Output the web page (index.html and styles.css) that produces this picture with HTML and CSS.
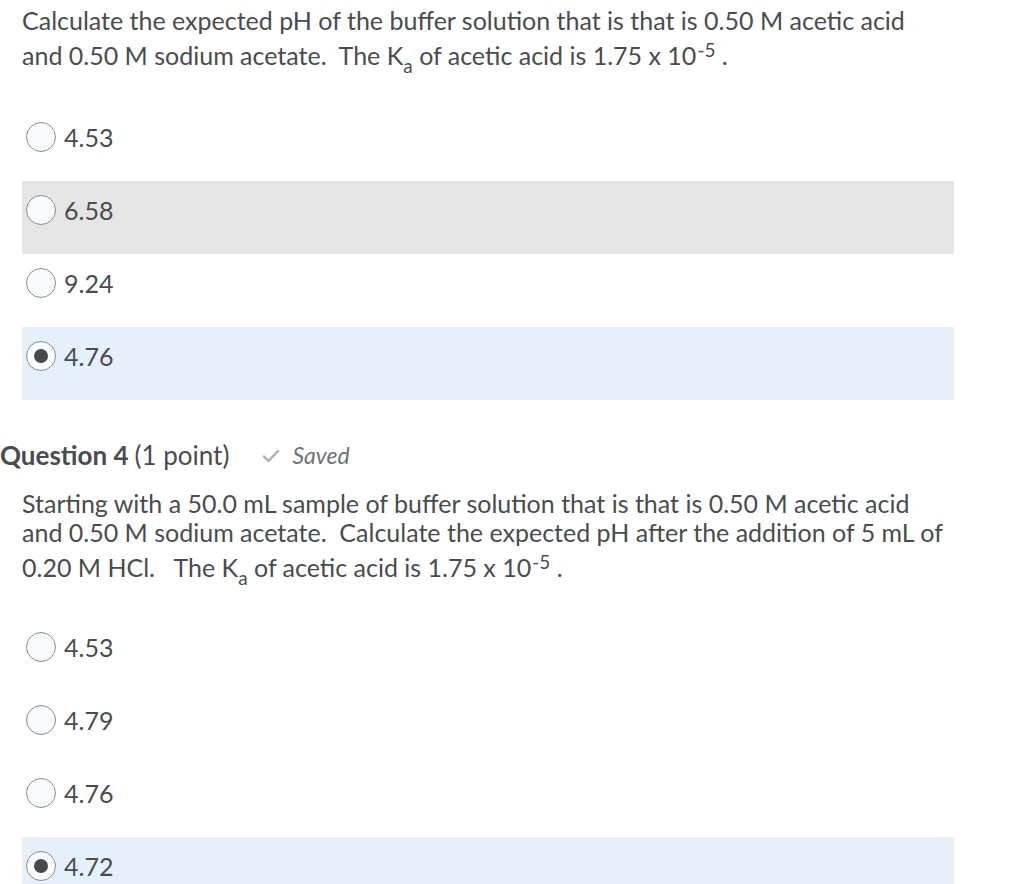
FILE: index.html
```html
<!DOCTYPE html>
<html lang="en">
<head>
  <meta charset="UTF-8">
  <title>Quiz - Buffer Solutions</title>
  <link rel="stylesheet" href="styles.css">
</head>
<body>
  <div class="question">
    <p class="question-text">Calculate the expected pH of the buffer solution that is that is 0.50 M acetic acid and 0.50 M sodium acetate.&nbsp; The K<sub>a</sub> of acetic acid is 1.75 x 10<sup>-5</sup> .</p>
    <ul class="choices">
      <li class="choice"><span class="radio"></span>4.53</li>
      <li class="choice hover"><span class="radio"></span>6.58</li>
      <li class="choice"><span class="radio"></span>9.24</li>
      <li class="choice selected"><span class="radio checked"></span>4.76</li>
    </ul>
  </div>

  <div class="question">
    <h2 class="question-title">
      <strong>Question 4</strong> (1 point)
      <span class="saved">
        <svg width="20" height="16" viewBox="0 0 20 16"><path d="M3 8.5 L7.5 13 L17 3" fill="none" stroke="#a9afb4" stroke-width="2.4" stroke-linecap="round" stroke-linejoin="round"/></svg>
        <em>Saved</em>
      </span>
    </h2>
    <p class="question-text">Starting with a 50.0 mL sample of buffer solution that is that is 0.50 M acetic acid and 0.50 M sodium acetate.&nbsp; Calculate the expected pH after the addition of 5 mL of 0.20 M HCl.&nbsp;&nbsp; The K<sub>a</sub> of acetic acid is 1.75 x 10<sup>-5</sup> .</p>
    <ul class="choices">
      <li class="choice"><span class="radio"></span>4.53</li>
      <li class="choice"><span class="radio"></span>4.79</li>
      <li class="choice"><span class="radio"></span>4.76</li>
      <li class="choice selected"><span class="radio checked"></span>4.72</li>
    </ul>
  </div>
</body>
</html>
```

FILE: styles.css
```css
body {
  margin: 0;
  padding: 0;
  background-color: #fff;
  color: #494c4e;
  font-family: Lato, 'Liberation Sans', sans-serif;
  font-size: 25px;
}

.question-text {
  margin: 6px 0 0 22px;
  width: 925px;
  line-height: 29px;
}

.question-text sup,
.question-text sub {
  font-size: 0.76em;
}

/* raised exponent: tall enough box to open up the line a little */
.question-text sup {
  vertical-align: 8px;
  line-height: 30px;
  margin-left: 1px;
}

.question-text sub {
  vertical-align: -8px;
  line-height: 0;
}

.choices {
  list-style: none;
  margin: 38px 0 0 22px;
  padding: 0;
  width: 932px;
}

.choice {
  display: flex;
  align-items: center;
  gap: 8px;
  height: 30px;
  padding: 14px 0 29px 4px;
}

.choice.hover {
  background-color: #e5e5e5;
}

.choice.selected {
  background-color: #e6f0fa;
}

.radio {
  box-sizing: border-box;
  width: 30px;
  height: 30px;
  border-radius: 50%;
  border: 1px solid #8a8d90;
  background-color: #f9fafc;
  display: flex;
  align-items: center;
  justify-content: center;
}

.radio.checked::after {
  content: '';
  width: 14px;
  height: 14px;
  border-radius: 50%;
  background-color: #464a4d;
}

.question-title {
  margin: 41px 0 0 0;
  font-size: 26px;
  font-weight: normal;
  line-height: 29px;
  display: flex;
  align-items: center;
}

.question-title strong {
  font-weight: bold;
  margin-right: 6px;
}

.saved {
  display: flex;
  align-items: center;
  gap: 11px;
  margin-left: 32px;
  color: #6e7376;
  font-size: 23px;
}

.question-title + .question-text {
  margin-top: 19px;
}

.question-title ~ .choices {
  margin-top: 36px;
}
```
